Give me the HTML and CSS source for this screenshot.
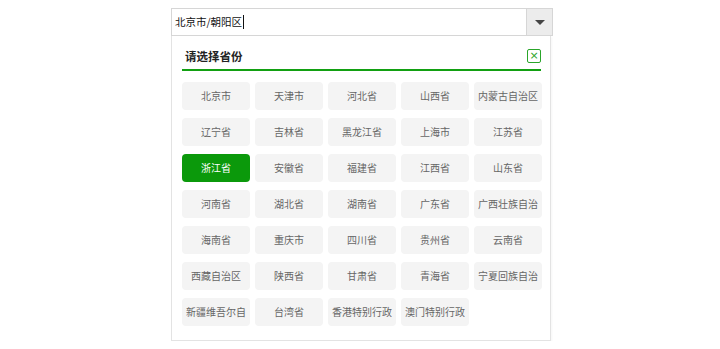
FILE: index.html
```html
<!DOCTYPE html>
<html lang="zh">
<head>
<meta charset="utf-8">
<title>省份选择</title>
<link rel="stylesheet" href="styles.css">
</head>
<body>
<div class="picker">
  <div class="field">
    <div class="field-text">北京市/朝阳区<span class="caret"></span></div>
    <div class="field-btn"><span class="arrow"></span></div>
  </div>
  <div class="panel">
    <div class="panel-head">
      <span class="panel-title">请选择省份</span>
      <span class="close">×</span>
    </div>
    <div class="grid">
      <div class="item"><span class="label">北京市</span></div>
      <div class="item"><span class="label">天津市</span></div>
      <div class="item"><span class="label">河北省</span></div>
      <div class="item"><span class="label">山西省</span></div>
      <div class="item"><span class="label">内蒙古自治区</span></div>
      <div class="item"><span class="label">辽宁省</span></div>
      <div class="item"><span class="label">吉林省</span></div>
      <div class="item"><span class="label">黑龙江省</span></div>
      <div class="item"><span class="label">上海市</span></div>
      <div class="item"><span class="label">江苏省</span></div>
      <div class="item active"><span class="label">浙江省</span></div>
      <div class="item"><span class="label">安徽省</span></div>
      <div class="item"><span class="label">福建省</span></div>
      <div class="item"><span class="label">江西省</span></div>
      <div class="item"><span class="label">山东省</span></div>
      <div class="item"><span class="label">河南省</span></div>
      <div class="item"><span class="label">湖北省</span></div>
      <div class="item"><span class="label">湖南省</span></div>
      <div class="item"><span class="label">广东省</span></div>
      <div class="item"><span class="label">广西壮族自治区</span></div>
      <div class="item"><span class="label">海南省</span></div>
      <div class="item"><span class="label">重庆市</span></div>
      <div class="item"><span class="label">四川省</span></div>
      <div class="item"><span class="label">贵州省</span></div>
      <div class="item"><span class="label">云南省</span></div>
      <div class="item"><span class="label">西藏自治区</span></div>
      <div class="item"><span class="label">陕西省</span></div>
      <div class="item"><span class="label">甘肃省</span></div>
      <div class="item"><span class="label">青海省</span></div>
      <div class="item"><span class="label">宁夏回族自治区</span></div>
      <div class="item"><span class="label">新疆维吾尔自治区</span></div>
      <div class="item"><span class="label">台湾省</span></div>
      <div class="item"><span class="label">香港特别行政区</span></div>
      <div class="item"><span class="label">澳门特别行政区</span></div>
    </div>
  </div>
</div>
</body>
</html>
```
FILE: styles.css
```css
html, body {
  margin: 0;
  padding: 0;
  background: #fff;
}
body {
  font-family: "Noto Sans CJK SC", "Noto Sans", sans-serif;
}
.picker {
  margin: 8px 0 0 171px;
  width: 382px;
}
.field {
  display: flex;
  height: 26px;
  border: 1px solid #d6d6d6;
}
.field-text {
  flex: 1;
  padding-left: 3px;
  font-size: 10.5px;
  line-height: 26px;
  color: #111;
  display: flex;
  align-items: center;
}
.caret {
  display: inline-block;
  width: 1px;
  height: 14px;
  background: #111;
  margin-left: 1px;
}
.field-btn {
  width: 25px;
  border-left: 1px solid #d6d6d6;
  background: #ececec;
  display: flex;
  align-items: center;
  justify-content: center;
}
.arrow {
  width: 0;
  height: 0;
  border-left: 5px solid transparent;
  border-right: 5px solid transparent;
  border-top: 5px solid #444;
}
.panel {
  width: 359px;
  border: 1px solid #e3e3e3;
  border-top: none;
  padding: 0 9px 14px 10px;
  box-shadow: 1px 1px 2px rgba(0,0,0,0.04);
}
.panel-head {
  display: flex;
  align-items: center;
  justify-content: space-between;
  padding: 12px 0 5px 3px;
  border-bottom: 2px solid #12a012;
}
.panel-title {
  font-size: 11.5px;
  font-weight: bold;
  color: #222;
  line-height: 16px;
}
.close {
  width: 12px;
  height: 12px;
  border: 1px solid #2aa52a;
  border-radius: 2px;
  color: #2aa52a;
  font-size: 11px;
  line-height: 11px;
  text-align: center;
  font-family: "DejaVu Sans", sans-serif;
}
.grid {
  margin-top: 11px;
  display: grid;
  grid-template-columns: repeat(5, 68px);
  grid-auto-rows: 28px;
  column-gap: 5px;
  row-gap: 8px;
}
.item {
  background: #f4f4f4;
  border-radius: 4px;
  color: #666;
  font-size: 10px;
  line-height: 28px;
  text-align: center;
  white-space: nowrap;
  overflow: hidden;
}
.label {
  display: inline-block;
  max-width: 60px;
  overflow: hidden;
  vertical-align: top;
}
.item.active {
  background: #0b990b;
  color: #fff;
}
```
